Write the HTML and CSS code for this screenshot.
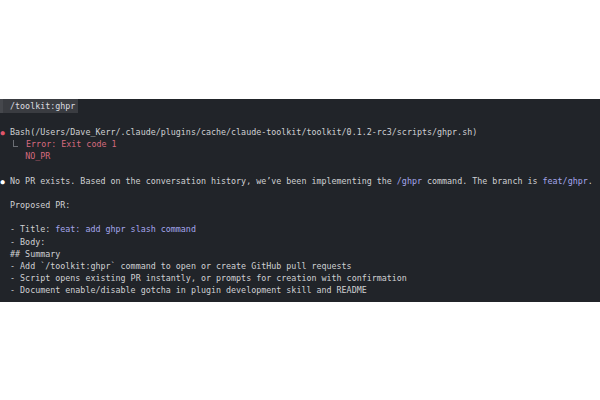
FILE: index.html
```html
<!DOCTYPE html>
<html>
<head>
<meta charset="utf-8">
<link rel="stylesheet" href="styles.css">
</head>
<body>
<div class="term">
  <div class="prompt-row"><span class="prompt">  /toolkit:ghpr</span></div>
  <div class="gap"></div>
  <div class="line"><span class="dot red">●</span> Bash(/Users/Dave_Kerr/.claude/plugins/cache/claude-toolkit/toolkit/0.1.2-rc3/scripts/ghpr.sh)</div>
  <div class="line">  <span class="elbow"></span> <span class="err">Error: Exit code 1</span></div>
  <div class="line">     <span class="err">NO_PR</span></div>
  <div class="line"></div>
  <div class="line"><span class="dot white">●</span> No PR exists. Based on the conversation history, we’ve been implementing the <span class="hl">/ghpr</span> command. The branch is <span class="hl">feat/ghpr</span>.</div>
  <div class="line"></div>
  <div class="line">  Proposed PR:</div>
  <div class="line"></div>
  <div class="line">  - Title: <span class="hl">feat: add ghpr slash command</span></div>
  <div class="line">  - Body:</div>
  <div class="line">  ## Summary</div>
  <div class="line">  - Add `/toolkit:ghpr` command to open or create GitHub pull requests</div>
  <div class="line">  - Script opens existing PR instantly, or prompts for creation with confirmation</div>
  <div class="line">  - Document enable/disable gotcha in plugin development skill and README</div>
</div>
</body>
</html>
```

FILE: styles.css
```css
html, body {
  margin: 0;
  padding: 0;
  background: #ffffff;
}

body {
  height: 100vh;
  display: flex;
  flex-direction: column;
  justify-content: center;
}

.term {
  height: 203px;
  background: #212429;
  color: #cfd0d3;
  font-family: "DejaVu Sans Mono", "Liberation Mono", monospace;
  font-size: 8.35px;
  overflow: hidden;
  box-sizing: border-box;
}

.prompt-row {
  height: 14px;
  display: flex;
}

.prompt {
  display: block;
  white-space: pre;
  background: #3a3c41;
  color: #dcdde0;
  line-height: 14px;
  padding-right: 3px;
  box-shadow: inset 3px 0 0 #45474c;
}

.gap {
  height: 13.4px;
}

.line {
  height: 12.2px;
  line-height: 12.2px;
  white-space: pre;
}

.dot {
  display: inline-block;
  width: 5.03px;
  text-align: center;
  font-size: 7px;
}

.red {
  color: #e0566b;
}

.white {
  color: #ffffff;
}

.err {
  color: #d46a7e;
}

.hl {
  color: #a4a6ec;
}

.elbow {
  display: inline-block;
  width: 4px;
  height: 6px;
  margin-left: 3px;
  margin-right: 3px;
  border-left: 1px solid #6b6e74;
  border-bottom: 1px solid #6b6e74;
  vertical-align: 0px;
}
```
